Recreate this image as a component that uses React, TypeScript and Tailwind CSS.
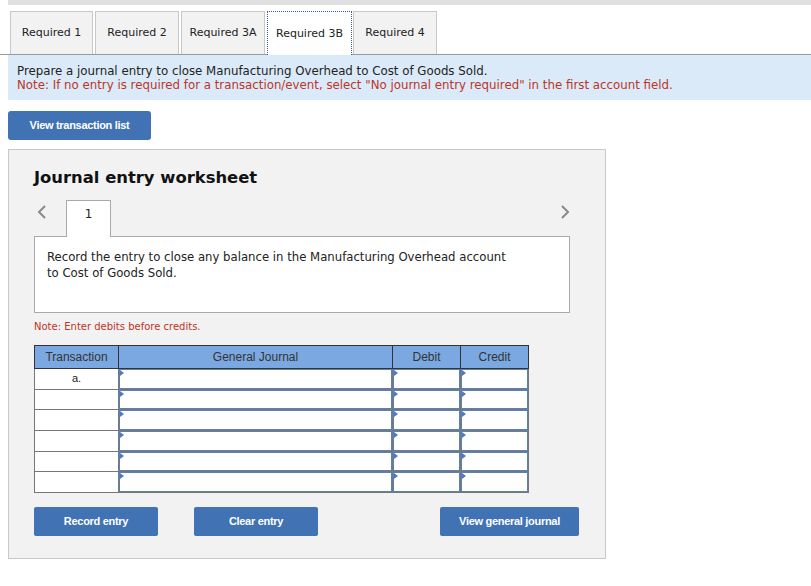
import React from 'react'

const tabs = ['Required 1', 'Required 2', 'Required 3A', 'Required 3B', 'Required 4']
const tabWidths = ['w-[83px]', 'w-[84px]', 'w-[84px]', 'w-[85px]', 'w-[84px]']
const tabGaps = ['ml-0', 'ml-[2px]', 'ml-[2px]', 'ml-[2px]', 'ml-[1px]']

function Arrow() {
  return (
    <span className="absolute left-0 top-0 h-0 w-0 border-y-[3px] border-l-[4px] border-y-transparent border-l-[#4a7bc4]" />
  )
}

function InputCell() {
  return (
    <td className="p-0 border border-[#777]">
      <div className="relative h-[19.7px] bg-white border border-[#5b80b6]">
        <Arrow />
      </div>
    </td>
  )
}

export default function App() {
  return (
    <div className="w-[811px] h-[586px] bg-white text-[#222] overflow-hidden" style={{ fontFamily: '"DejaVu Sans", Verdana, sans-serif' }}>
      {/* top strip */}
      <div className="ml-[8px] h-[5px] bg-[#e0e0e0]" />

      {/* tabs */}
      <div className="mt-[6px] flex pl-[10px] border-b border-[#9a9a9a]">
        {tabs.map((t, i) => (
          <div
            key={t}
            className={
              'h-[43px] flex items-center justify-center pt-[1px] text-[11px] ' + tabWidths[i] + ' ' + tabGaps[i] + ' ' +
              (i === 3
                ? 'bg-white border border-dotted border-[#3e5e9c] border-b-0 -mb-px h-[44px]'
                : 'bg-[#f2f2f2] border border-[#c8c8c8] border-b-0')
            }
          >
            {t}
          </div>
        ))}
      </div>

      {/* instructions */}
      <div className="ml-[8px] bg-[#dbeaf8] pl-[9px] pt-[9px] pb-[8px] text-[11.8px] leading-[14px]">
        <div className="text-[#222]">Prepare a journal entry to close Manufacturing Overhead to Cost of Goods Sold.</div>
        <div className="text-[#bd3427]">Note: If no entry is required for a transaction/event, select "No journal entry required" in the first account field.</div>
      </div>

      <button className="ml-[8px] mt-[11px] w-[143px] h-[29px] rounded-[3px] bg-[#4072b4] text-white text-[11px] font-bold tracking-[-0.3px]" style={{ fontFamily: '"Liberation Sans", Arial, sans-serif' }}>
        View transaction list
      </button>

      {/* worksheet card */}
      <div className="ml-[8px] mt-[9px] w-[598px] h-[410px] bg-[#f2f2f2] border border-[#c8c8c8] pl-[25px] pr-[26px] pt-[18px]">
        <h2 className="text-[16.4px] leading-[20px] font-bold text-[#111]">Journal entry worksheet</h2>

        <div className="mt-[11px] relative flex items-end h-[37px]">
          <svg className="absolute left-[3px] top-[6px]" width="10" height="14" viewBox="0 0 10 14">
            <path d="M8 1 L2 7 L8 13" fill="none" stroke="#8a8a8a" strokeWidth="2" />
          </svg>
          <div className="ml-[32px] w-[45px] h-[37px] bg-white border border-[#aaa] border-b-0 -mb-px relative z-10 flex justify-center pt-[4px] text-[12px]">
            1
          </div>
          <svg className="absolute right-[9px] top-[6px]" width="10" height="14" viewBox="0 0 10 14">
            <path d="M2 1 L8 7 L2 13" fill="none" stroke="#8a8a8a" strokeWidth="2" />
          </svg>
        </div>

        <div className="w-[536px] h-[77px] bg-white border border-[#aaa] pl-[12px] pt-[12px] text-[11.7px] leading-[16px]">
          Record the entry to close any balance in the Manufacturing Overhead account
          <br />
          to Cost of Goods Sold.
        </div>

        <div className="mt-[6px] text-[10px] text-[#bd3427]">Note: Enter debits before credits.</div>

        <table className="mt-[11px] border-collapse table-fixed w-[494px] text-[12px]" style={{ fontFamily: '"Liberation Sans", Arial, sans-serif' }}>
          <colgroup>
            <col className="w-[84px]" />
            <col className="w-[274px]" />
            <col className="w-[68px]" />
            <col className="w-[68px]" />
          </colgroup>
          <thead>
            <tr className="h-[23px] bg-[#7ba8e0] text-[#333]">
              <th className="font-normal border border-[#333]">Transaction</th>
              <th className="font-normal border border-[#333]">General Journal</th>
              <th className="font-normal border border-[#333]">Debit</th>
              <th className="font-normal border border-[#333]">Credit</th>
            </tr>
          </thead>
          <tbody>
            {[0, 1, 2, 3, 4, 5].map((r) => (
              <tr key={r}>
                <td className="bg-white border border-[#777] text-center text-[11px] align-top leading-[18px] p-0">
                  {r === 0 ? 'a.' : ''}
                </td>
                <InputCell />
                <InputCell />
                <InputCell />
              </tr>
            ))}
          </tbody>
        </table>

        <div className="mt-[14px] flex text-white text-[11px] font-bold tracking-[-0.3px]" style={{ fontFamily: '"Liberation Sans", Arial, sans-serif' }}>
          <button className="w-[124px] h-[29px] rounded-[2px] bg-[#4072b4]">Record entry</button>
          <button className="ml-[36px] w-[124px] h-[29px] rounded-[2px] bg-[#4072b4]">Clear entry</button>
          <button className="ml-auto w-[139px] h-[29px] rounded-[2px] bg-[#4072b4]">View general journal</button>
        </div>
      </div>
    </div>
  )
}
